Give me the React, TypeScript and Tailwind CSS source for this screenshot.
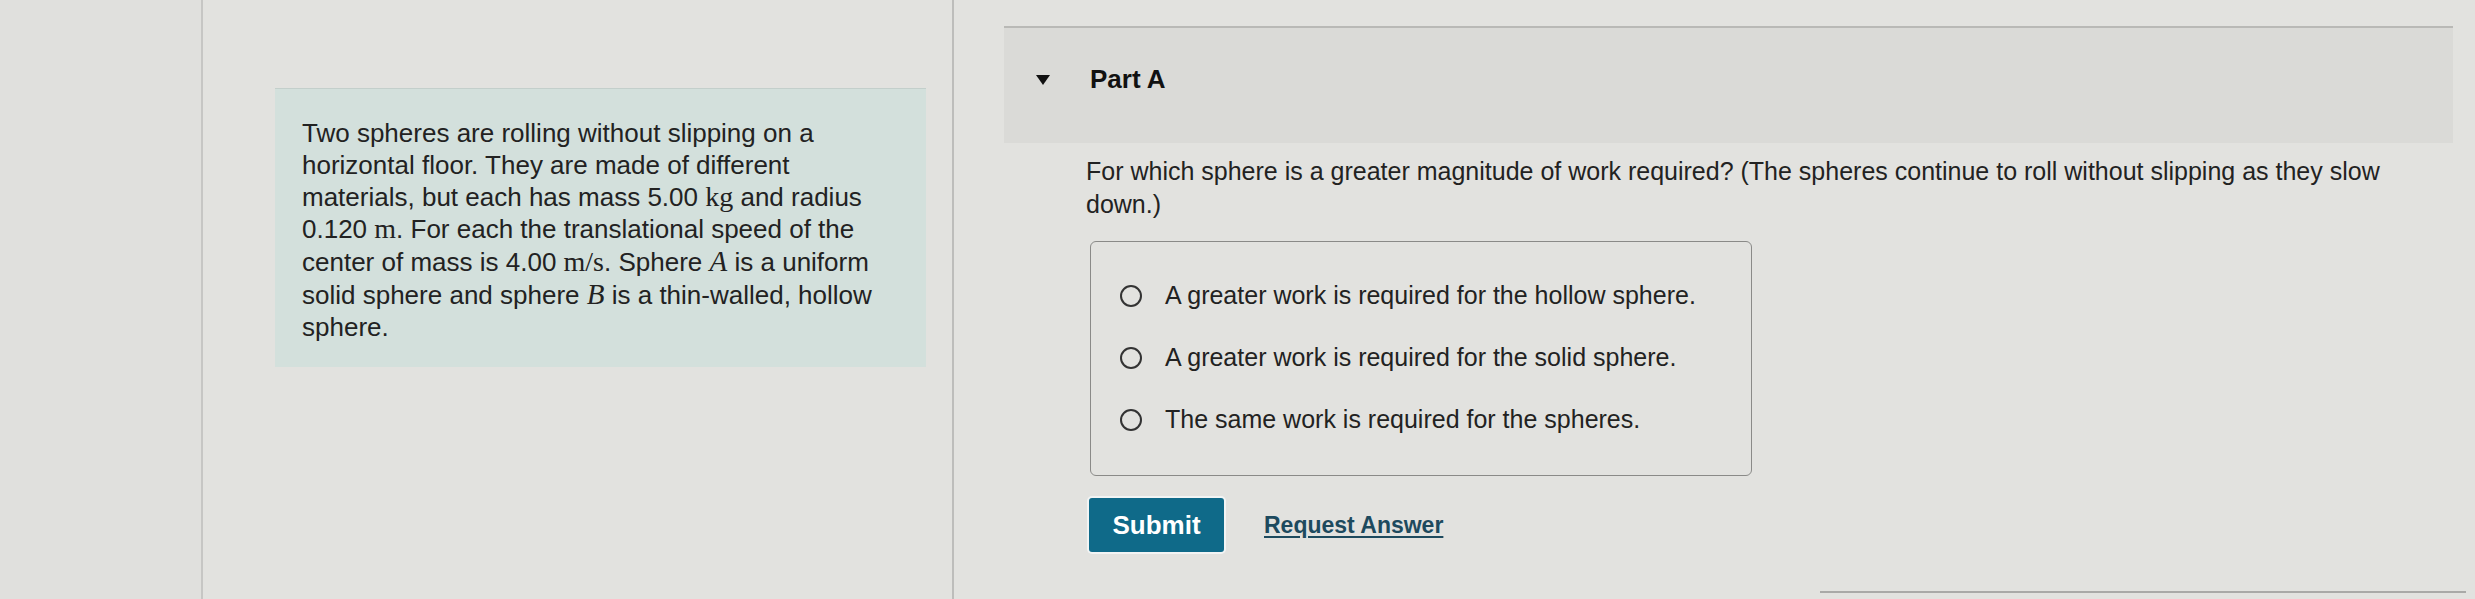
import React from 'react'

const serif = { fontFamily: '"Liberation Serif", "Times New Roman", serif' }

function M({ children, italic = false }: { children: React.ReactNode; italic?: boolean }) {
  return (
    <span className={italic ? 'text-[29px] italic' : 'text-[28px]'} style={serif}>
      {children}
    </span>
  )
}

function Radio({ label }: { label: string }) {
  return (
    <label className="flex h-[30px] items-center gap-[23px]">
      <span className="h-[22px] w-[22px] shrink-0 rounded-full border-2 border-[#333]" />
      <span>{label}</span>
    </label>
  )
}

export default function App() {
  const options = [
    'A greater work is required for the hollow sphere.',
    'A greater work is required for the solid sphere.',
    'The same work is required for the spheres.',
  ]

  return (
    <div
      className="flex h-[599px] w-[2475px] overflow-hidden bg-[#e2e2df] text-[#222]"
      style={{ fontFamily: '"Liberation Sans", Arial, sans-serif' }}
    >
      <div className="h-full w-[203px] shrink-0 border-r-2 border-[#c6c6c4] bg-[#e0e0dd]" />

      <div className="h-full w-[751px] shrink-0 border-r-2 border-[#bdbdbb] pl-[72px] pt-[88px]">
        <div className="h-[279px] w-[651px] border-t border-[#c3cfcb] bg-[#d3e0dc] px-[27px] pt-[28px] text-[26px] leading-[32px]">
          Two spheres are rolling without slipping on a<br />
          horizontal floor. They are made of different<br />
          materials, but each has mass 5.00 <M>kg</M> and radius<br />
          0.120 <M>m</M>. For each the translational speed of the<br />
          center of mass is 4.00 <M>m/s</M>. Sphere <M italic>A</M> is a uniform<br />
          solid sphere and sphere <M italic>B</M> is a thin-walled, hollow<br />
          sphere.
        </div>
      </div>

      <div className="flex h-full flex-1 flex-col pl-[50px] pr-[22px] pt-[26px]">
        <div className="flex h-[117px] items-start gap-[40px] border-t-2 border-[#b9b9b6] bg-[#dadad7] pl-[32px] pt-[33px]">
          <svg width="14" height="10" viewBox="0 0 14 10" className="mt-[14px]">
            <polygon points="0,0 14,0 7,10" fill="#111" />
          </svg>
          <span className="text-[26px] font-bold leading-[36px] text-[#111]">Part A</span>
        </div>

        <div className="pl-[82px]">
          <p className="mt-[12px] text-[25px] leading-[33px]">
            For which sphere is a greater magnitude of work required? (The spheres continue to roll without slipping as they slow
            <br />
            down.)
          </p>

          <div className="ml-[4px] mt-[20px] flex h-[235px] w-[662px] flex-col gap-[32px] rounded-[6px] border-[1.5px] border-[#8a8a88] pl-[29px] pt-[39px] text-[25px]">
            {options.map((o) => (
              <Radio key={o} label={o} />
            ))}
          </div>

          <div className="ml-[3px] mt-[22px] flex items-center gap-[40px]">
            <button className="h-[54px] w-[135px] rounded-[3px] bg-[#0f6a89] text-[26px] font-bold text-white ring-2 ring-[#f2f4f4]">
              Submit
            </button>
            <a className="text-[23px] font-bold text-[#1d4a5e] underline underline-offset-[3px]">Request Answer</a>
          </div>
        </div>

        <div className="mb-[6px] -mr-[13px] mt-auto h-[2px] w-[646px] self-end bg-[#a9a9a7]" />
      </div>
    </div>
  )
}
